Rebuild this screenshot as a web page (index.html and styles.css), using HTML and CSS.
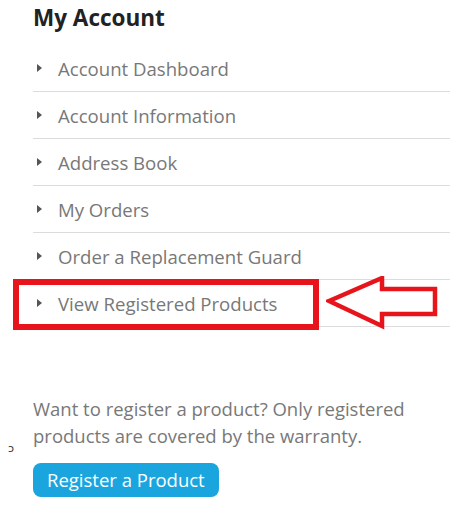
FILE: index.html
```html
<!DOCTYPE html>
<html>
<head>
<meta charset="utf-8">
<link rel="stylesheet" href="styles.css">
</head>
<body>
<div class="page">
  <h2 class="title">My Account</h2>
  <ul class="nav">
    <li class="nav-item"><span class="caret"></span>Account Dashboard</li>
    <li class="nav-item"><span class="caret"></span>Account Information</li>
    <li class="nav-item"><span class="caret"></span>Address Book</li>
    <li class="nav-item"><span class="caret"></span>My Orders</li>
    <li class="nav-item"><span class="caret"></span>Order a Replacement Guard</li>
    <li class="nav-item"><span class="caret"></span>View Registered Products</li>
  </ul>
  <p class="note">Want to register a product? Only registered products are covered by the warranty.</p>
  <a class="btn">Register a Product</a>

  <div class="highlight-box"></div>
  <svg class="arrow" width="114" height="54" viewBox="0 0 114 54">
    <polygon points="3,25 56,2 56,13 109,13 109,38 56,38 56,50" fill="#fff" stroke="#e8141c" stroke-width="4.5" stroke-linejoin="miter"/>
  </svg>
  <span class="mark">ↄ</span>
</div>
</body>
</html>
```

FILE: styles.css
```css
html, body {
  margin: 0;
  padding: 0;
  background: #fff;
}
.page {
  position: relative;
  width: 474px;
  height: 510px;
  padding: 0 24px 0 33px;
  box-sizing: border-box;
  font-family: "Open Sans", "DejaVu Sans", sans-serif;
  overflow: hidden;
}
.title {
  margin: 0;
  padding-top: 3px;
  font-size: 22.5px;
  line-height: 30px;
  font-weight: 700;
  color: #222;
}
.nav {
  list-style: none;
  margin: 12px 0 0 0;
  padding: 0;
}
.nav-item {
  display: flex;
  align-items: center;
  height: 46px;
  border-bottom: 1px solid #dcdcdc;
  font-size: 18.6px;
  color: #787878;
}
.caret {
  width: 0;
  height: 0;
  margin: 0 16px 0 4px;
  border-left: 5px solid #555;
  border-top: 4.5px solid transparent;
  border-bottom: 4.5px solid transparent;
}
.note {
  margin: 68px 0 0 0;
  font-size: 18.5px;
  line-height: 27px;
  color: #787878;
}
.btn {
  display: inline-block;
  margin-top: 14px;
  padding: 0 14px;
  height: 34px;
  line-height: 33px;
  font-size: 18.5px;
  color: #fff;
  background: #1aa5df;
  border-radius: 8px;
}
.highlight-box {
  position: absolute;
  left: 13px;
  top: 279px;
  width: 306px;
  height: 51px;
  border: 6px solid #e8141c;
  box-sizing: border-box;
}
.arrow {
  position: absolute;
  left: 326px;
  top: 276px;
}
.mark {
  position: absolute;
  left: 8px;
  top: 440px;
  font-size: 11px;
  color: #333;
}
```
